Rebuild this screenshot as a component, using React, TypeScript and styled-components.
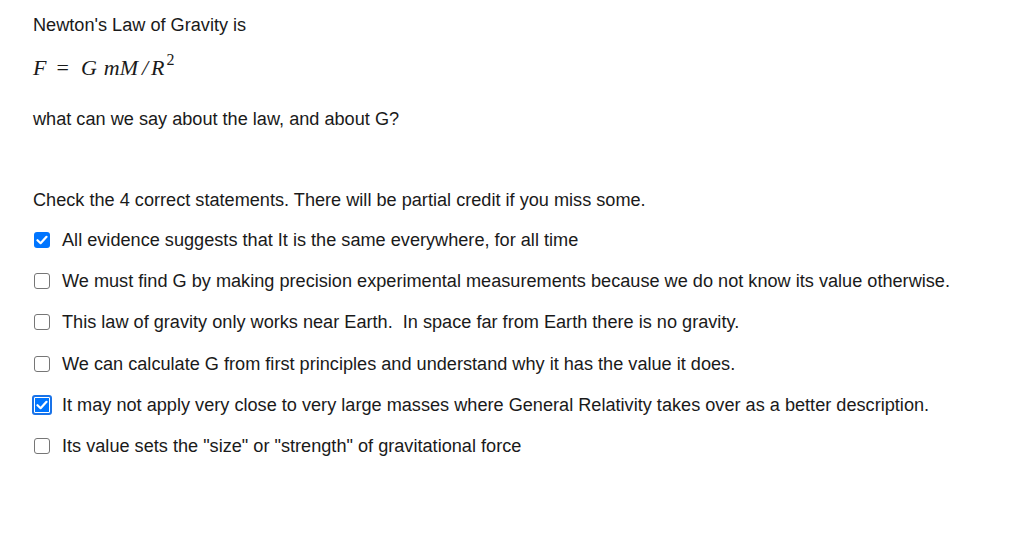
import React, { useState } from 'react';
import styled, { createGlobalStyle } from 'styled-components';

const GlobalStyle = createGlobalStyle`
  body {
    margin: 0;
    background: #ffffff;
    font-family: "Liberation Sans", Arial, sans-serif;
    color: #1a1a1a;
  }
`;

const Page = styled.div`
  padding: 14px 33px;
  font-size: 18.15px;
`;

const Para = styled.p<{ $gap?: number }>`
  margin: 0 0 ${(p) => p.$gap ?? 20}px 0;
  line-height: 22px;
`;

const Formula = styled.div`
  font-family: "Liberation Serif", "Times New Roman", serif;
  font-style: italic;
  font-size: 22px;
  margin: 2px 0 28px 0;
  line-height: 24px;
  .op {
    font-style: normal;
    margin: 0 12px 0 10px;
  }
  .sp {
    margin-left: 7px;
  }
  .sl {
    margin: 0 3px 0 4px;
  }
  sup {
    font-style: normal;
    font-size: 16px;
    vertical-align: 10px;
    line-height: 0;
    margin-left: 2px;
  }
`;

const List = styled.div`
  display: flex;
  flex-direction: column;
  gap: 19.2px;
`;

const Row = styled.label`
  display: flex;
  align-items: center;
  gap: 12px;
  line-height: 22px;
  cursor: pointer;
`;

const Box = styled.span<{ $checked: boolean; $focused?: boolean }>`
  flex: none;
  width: 16px;
  height: 16px;
  box-sizing: border-box;
  margin-left: 1px;
  border-radius: 3px;
  display: flex;
  align-items: center;
  justify-content: center;
  border: ${(p) => (p.$checked ? 'none' : '1.5px solid #767676')};
  background: ${(p) => (p.$checked ? '#0075ff' : '#ffffff')};
  outline: ${(p) => (p.$focused ? '2px solid #1a73e8' : 'none')};
  outline-offset: 0;
  box-shadow: ${(p) => (p.$focused ? 'inset 0 0 0 1px #ffffff' : 'none')};
  ${(p) => (p.$focused ? 'border-radius: 1px;' : '')}
`;

const Label = styled.span`
  white-space: nowrap;
`;

const items = [
  { text: 'All evidence suggests that It is the same everywhere, for all time', checked: true },
  { text: 'We must find G by making precision experimental measurements because we do not know its value otherwise.', checked: false },
  { text: 'This law of gravity only works near Earth.\u00a0 In space far from Earth there is no gravity.', checked: false },
  { text: 'We can calculate G from first principles and understand why it has the value it does.', checked: false },
  { text: 'It may not apply very close to very large masses where General Relativity takes over as a better description.', checked: true, focused: true },
  { text: 'Its value sets the "size" or "strength" of gravitational force', checked: false },
];

const Check = () => (
  <svg width="12" height="10" viewBox="0 0 12 10">
    <path d="M1.5 5.2 L4.6 8.2 L10.5 1.8" fill="none" stroke="#ffffff" strokeWidth="2.2" strokeLinecap="round" strokeLinejoin="round" />
  </svg>
);

export default function App() {
  const [state, setState] = useState(items.map((i) => i.checked));
  return (
    <>
      <GlobalStyle />
      <Page>
        <Para $gap={20}>Newton's Law of Gravity is</Para>
        <Formula>
          F<span className="op">=</span>G<span className="sp">mM</span>
          <span className="sl">/</span>R<sup>2</sup>
        </Formula>
        <Para $gap={59}>what can we say about the law, and about G?</Para>
        <Para $gap={18}>Check the 4 correct statements. There will be partial credit if you miss some.</Para>
        <List>
          {items.map((it, i) => (
            <Row key={i} onClick={() => setState((s) => s.map((v, j) => (j === i ? !v : v)))}>
              <Box $checked={state[i]} $focused={it.focused}>
                {state[i] && <Check />}
              </Box>
              <Label>{it.text}</Label>
            </Row>
          ))}
        </List>
      </Page>
    </>
  );
}
